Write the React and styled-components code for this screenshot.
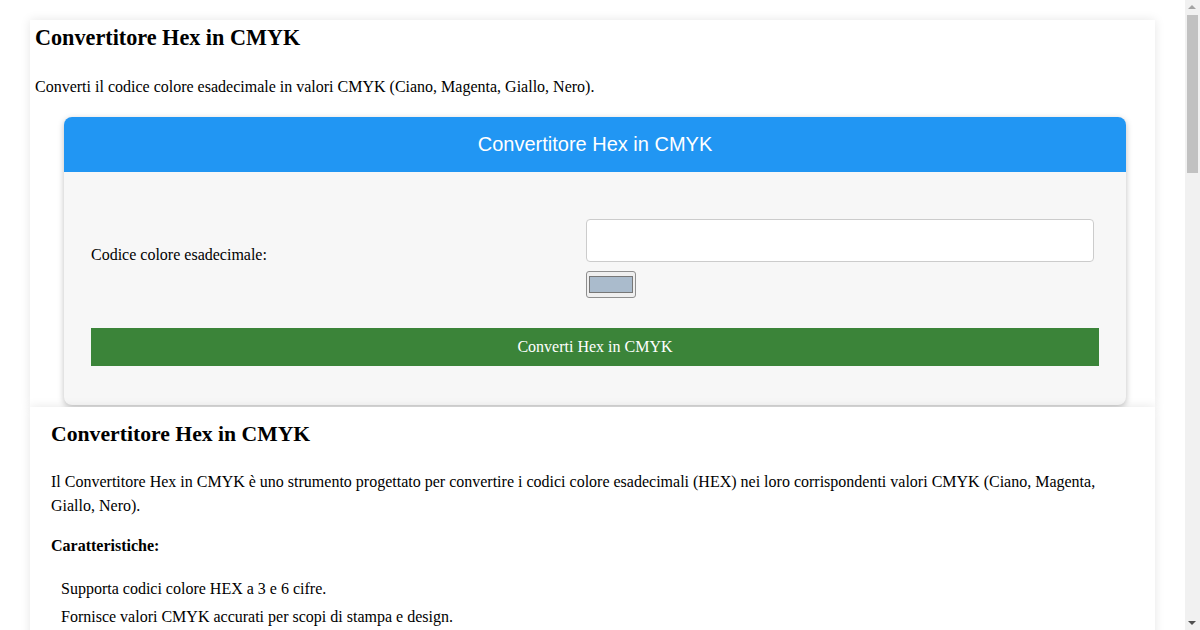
import React from "react";
import styled, { createGlobalStyle } from "styled-components";

const Global = createGlobalStyle`
  html, body { margin: 0; padding: 0; background: #fff; }
  body { font-family: "Liberation Serif", "Times New Roman", serif; font-size: 16px; color: #000; }
`;

const Page = styled.main`
  width: calc(100% - 15px);
`;

const ScrollTrack = styled.div`
  position: fixed;
  top: 0;
  right: 0;
  width: 15px;
  height: 100vh;
  background: #f1f1f1;
`;

const ScrollThumb = styled.div`
  position: absolute;
  top: 15px;
  left: 2px;
  width: 11px;
  height: 158px;
  background: #c1c1c1;
`;

const ScrollArrow = styled.div`
  position: absolute;
  left: 3px;
  width: 0;
  height: 0;
  border-left: 4.5px solid transparent;
  border-right: 4.5px solid transparent;
  ${(p) =>
    p.$down
      ? "bottom: 5px; border-top: 4.5px solid #505050;"
      : "top: 5px; border-bottom: 4.5px solid #a3a3a3;"}
`;

const Card = styled.section`
  margin: ${(p) => (p.$first ? "20px 30px 0" : "0 30px 20px")};
  padding: ${(p) => (p.$first ? "4px 5px 1px" : "14px 20px 20px 21px")};
  background: #fff;
  box-shadow: 0 0 10px rgba(0, 0, 0, 0.1);
`;

const Title = styled.h2`
  margin: 0 0 ${(p) => (p.$small ? "22px" : "24px")};
  font-size: ${(p) => (p.$small ? "21.7px" : "22.2px")};
  line-height: 27px;
  font-weight: bold;
`;

const Text = styled.p`
  margin: 0 0 ${(p) => p.$mb || "16px"};
  line-height: 24px;
`;

const Strong = styled.p`
  margin: 0 0 19px;
  line-height: 24px;
  font-weight: bold;
`;

const List = styled.ul`
  list-style: none;
  margin: 0 0 16px;
  padding-left: 10px;
`;

const Item = styled.li`
  line-height: 24px;
  margin-bottom: 4px;
`;

const Widget = styled.div`
  margin: 18px 24px 1px 29px;
  border-radius: 8px;
  overflow: hidden;
  background: #f7f7f7;
  box-shadow: 0 2px 6px rgba(0, 0, 0, 0.25);
`;

const WidgetHeader = styled.div`
  height: 55px;
  display: flex;
  align-items: center;
  justify-content: center;
  background: #2196f3;
  color: #fff;
  font-family: "Liberation Sans", Arial, sans-serif;
  font-size: 20px;
`;

const WidgetBody = styled.div`
  padding: 47px 27px 39px;
`;

const FormRow = styled.div`
  display: grid;
  grid-template-columns: 495px 508px;
  align-items: start;
`;

const Label = styled.label`
  margin-top: 27px;
  line-height: 18px;
`;

const Field = styled.div`
  display: flex;
  flex-direction: column;
  align-items: flex-start;
  gap: 9px;
`;

const TextInput = styled.input`
  box-sizing: border-box;
  width: 508px;
  height: 43px;
  padding: 10px;
  border: 1px solid #ccc;
  border-radius: 4px;
  background: #fff;
  font-size: 16px;
  outline: none;
`;

const ColorInput = styled.input`
  box-sizing: border-box;
  width: 50px;
  height: 27px;
  margin: 0;
  padding: 1px 2px;
  border: 1px solid #8f8f8f;
  border-radius: 3px;
  background: #efefef;
  &::-webkit-color-swatch-wrapper {
    padding: 3px 0;
  }
  &::-webkit-color-swatch {
    border: 1px solid #777;
  }
`;

const ConvertButton = styled.button`
  display: block;
  width: 100%;
  height: 38px;
  margin-top: 30px;
  border: none;
  background: #3b8439;
  color: #fff;
  font-family: "Liberation Serif", "Times New Roman", serif;
  font-size: 16px;
  cursor: pointer;
`;

export default function App() {
  return (
    <>
      <Global />
      <Page>
        <Card $first>
          <Title>Convertitore Hex in CMYK</Title>
          <Text $mb="0">
            Converti il codice colore esadecimale in valori CMYK (Ciano, Magenta, Giallo, Nero).
          </Text>
          <Widget>
            <WidgetHeader>Convertitore Hex in CMYK</WidgetHeader>
            <WidgetBody>
              <FormRow>
                <Label htmlFor="hex">Codice colore esadecimale:</Label>
                <Field>
                  <TextInput id="hex" type="text" />
                  <ColorInput type="color" defaultValue="#aabbcc" />
                </Field>
              </FormRow>
              <ConvertButton type="button">Converti Hex in CMYK</ConvertButton>
            </WidgetBody>
          </Widget>
        </Card>
        <Card>
          <Title $small>Convertitore Hex in CMYK</Title>
          <Text>
            Il Convertitore Hex in CMYK è uno strumento progettato per convertire i codici colore
            esadecimali (HEX) nei loro corrispondenti valori CMYK (Ciano, Magenta, Giallo, Nero).
          </Text>
          <Strong>Caratteristiche:</Strong>
          <List>
            <Item>Supporta codici colore HEX a 3 e 6 cifre.</Item>
            <Item>Fornisce valori CMYK accurati per scopi di stampa e design.</Item>
            <Item>Anteprima del colore tramite il selettore integrato.</Item>
            <Item>Interfaccia semplice e veloce, utilizzabile da qualsiasi dispositivo.</Item>
            <Item>Nessuna installazione richiesta: funziona direttamente nel browser.</Item>
          </List>
          <Strong>Come si usa:</Strong>
          <List>
            <Item>Inserisci il codice colore esadecimale nel campo apposito (ad esempio #aabbcc).</Item>
            <Item>In alternativa, scegli un colore con il selettore.</Item>
            <Item>Premi il pulsante "Converti Hex in CMYK".</Item>
            <Item>Leggi i valori di Ciano, Magenta, Giallo e Nero ottenuti.</Item>
          </List>
          <Strong>Cos'è il formato HEX?</Strong>
          <Text>
            Il formato esadecimale rappresenta un colore con tre coppie di cifre, una per ciascun
            canale rosso, verde e blu. Ogni coppia va da 00 a FF, cioè da 0 a 255 in notazione
            decimale. È il formato più diffuso per indicare i colori nelle pagine web e nei fogli di
            stile.
          </Text>
          <Strong>Cos'è il modello CMYK?</Strong>
          <Text>
            Il modello CMYK è un modello di colore sottrattivo usato nella stampa. I colori si
            ottengono sovrapponendo inchiostri di colore ciano, magenta, giallo e nero. Ogni
            componente è espressa in percentuale, da 0% a 100%.
          </Text>
          <Strong>Formula di conversione:</Strong>
          <List>
            <Item>R' = R / 255, G' = G / 255, B' = B / 255</Item>
            <Item>K = 1 - max(R', G', B')</Item>
            <Item>C = (1 - R' - K) / (1 - K)</Item>
            <Item>M = (1 - G' - K) / (1 - K)</Item>
            <Item>Y = (1 - B' - K) / (1 - K)</Item>
          </List>
          <Strong>Esempi:</Strong>
          <List>
            <Item>#FFFFFF → C: 0%, M: 0%, Y: 0%, K: 0%</Item>
            <Item>#000000 → C: 0%, M: 0%, Y: 0%, K: 100%</Item>
            <Item>#FF0000 → C: 0%, M: 100%, Y: 100%, K: 0%</Item>
            <Item>#00FF00 → C: 100%, M: 0%, Y: 100%, K: 0%</Item>
            <Item>#0000FF → C: 100%, M: 100%, Y: 0%, K: 0%</Item>
            <Item>#AABBCC → C: 17%, M: 8%, Y: 0%, K: 20%</Item>
          </List>
          <Strong>Perché convertire HEX in CMYK?</Strong>
          <Text>
            I colori visualizzati sullo schermo usano il modello RGB, mentre le stampanti lavorano
            con inchiostri CMYK. Convertire i valori permette di ottenere stampe più fedeli ai colori
            scelti in fase di progettazione digitale, ad esempio per biglietti da visita, volantini,
            manifesti e imballaggi.
          </Text>
          <Strong>Note:</Strong>
          <List>
            <Item>La conversione è approssimativa e non tiene conto dei profili colore.</Item>
            <Item>Per lavori professionali consulta sempre la tipografia.</Item>
            <Item>Alcuni colori RGB molto saturi non sono riproducibili in stampa.</Item>
          </List>
          <Strong>Domande frequenti:</Strong>
          <Text>
            Posso inserire il codice senza il simbolo #? Sì, lo strumento accetta codici con o senza
            il simbolo iniziale.
          </Text>
          <Text>
            Il convertitore è gratuito? Sì, puoi usarlo senza limiti e senza registrazione.
          </Text>
          <Text>
            I miei dati vengono salvati? No, tutte le conversioni avvengono localmente nel browser.
          </Text>
          <Strong>Strumenti correlati:</Strong>
          <List>
            <Item>Convertitore CMYK in Hex</Item>
            <Item>Convertitore RGB in Hex</Item>
            <Item>Convertitore Hex in RGB</Item>
            <Item>Convertitore RGB in CMYK</Item>
            <Item>Convertitore HSL in Hex</Item>
            <Item>Selettore di colori online</Item>
          </List>
          <Text>
            Prova anche gli altri strumenti dedicati ai colori per semplificare il tuo lavoro di
            grafica e sviluppo web.
          </Text>
        </Card>
      </Page>
      <ScrollTrack aria-hidden="true">
        <ScrollArrow />
        <ScrollThumb />
        <ScrollArrow $down />
      </ScrollTrack>
    </>
  );
}
